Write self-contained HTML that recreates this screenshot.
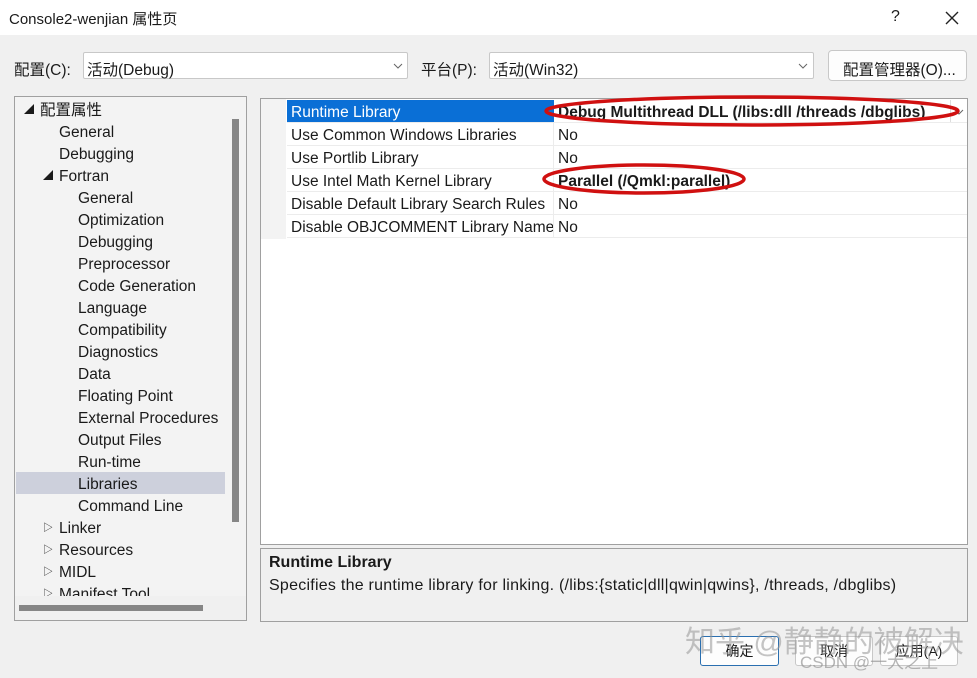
<!DOCTYPE html>
<html><head><meta charset="utf-8"><style>
*{margin:0;padding:0;box-sizing:border-box}
body{width:977px;height:678px;background:#f0f0f0;font-family:"Liberation Sans","Noto Sans CJK SC",sans-serif;font-size:15.5px;color:#1a1a1a;position:relative;overflow:hidden}
.a{position:absolute;white-space:nowrap}
.title{left:0;top:0;width:977px;height:35px;background:#fff}
.combo{background:#fff;border:1px solid #c8c8c8;border-radius:2px;height:27px}
.tree{left:14px;top:96px;width:233px;height:525px;border:1px solid #a0a0a0;background:#f3f3f3}
.ti{position:absolute;height:22px;line-height:24px;white-space:nowrap}
.grid{left:260px;top:98px;width:708px;height:447px;border:1px solid #a0a0a0;background:#fff}
.row{position:absolute;left:26px;width:680px;height:23px;border-bottom:1px solid #ececec;line-height:25px}
.row .n{position:absolute;left:4px;width:263px;overflow:hidden}
.row .v{position:absolute;left:271px}
.desc{left:260px;top:548px;width:708px;height:74px;border:1px solid #a0a0a0;background:#f0f0f0}
.btn{position:absolute;height:30px;border:1px solid #c8c8c8;border-radius:3px;background:#fdfdfd;text-align:center;line-height:28px;font-size:14px}
</style></head><body>
<div class="a title"></div>
<div class="a" style="left:9px;top:8px;font-size:15px">Console2-wenjian 属性页</div>
<div class="a" style="left:891px;top:8px;font-size:16px">?</div>
<svg class="a" style="left:945px;top:11px" width="14" height="14"><path d="M1 1L13 13M13 1L1 13" stroke="#222" stroke-width="1.4"/></svg>

<div class="a" style="left:14px;top:58px">配置(C):</div>
<div class="a combo" style="left:83px;top:52px;width:325px"></div>
<div class="a" style="left:87px;top:58px">活动(Debug)</div>
<svg class="a" style="left:393px;top:63px" width="10" height="6"><path d="M1 1L5 5L9 1" stroke="#666" fill="none"/></svg>
<div class="a" style="left:421px;top:58px">平台(P):</div>
<div class="a combo" style="left:489px;top:52px;width:325px"></div>
<div class="a" style="left:493px;top:58px">活动(Win32)</div>
<svg class="a" style="left:798px;top:63px" width="10" height="6"><path d="M1 1L5 5L9 1" stroke="#666" fill="none"/></svg>
<div class="a combo" style="left:828px;top:50px;width:139px;height:31px;background:#fdfdfd;border-radius:4px"></div>
<div class="a" style="left:843px;top:58px">配置管理器(O)...</div>

<div class="a tree">
<div class="ti" style="left:1px;top:375px;width:209px;background:#cdd0dc"></div>
<div class="ti" style="left:9px;top:2px;font-size:10px">◢</div><div class="ti" style="left:25px;top:2px">配置属性</div>
<div class="ti" style="left:44px;top:24px">General</div>
<div class="ti" style="left:44px;top:46px">Debugging</div>
<div class="ti" style="left:28px;top:68px;font-size:10px">◢</div><div class="ti" style="left:44px;top:68px">Fortran</div>
<div class="ti" style="left:63px;top:90px">General</div>
<div class="ti" style="left:63px;top:112px">Optimization</div>
<div class="ti" style="left:63px;top:134px">Debugging</div>
<div class="ti" style="left:63px;top:156px">Preprocessor</div>
<div class="ti" style="left:63px;top:178px">Code Generation</div>
<div class="ti" style="left:63px;top:200px">Language</div>
<div class="ti" style="left:63px;top:222px">Compatibility</div>
<div class="ti" style="left:63px;top:244px">Diagnostics</div>
<div class="ti" style="left:63px;top:266px">Data</div>
<div class="ti" style="left:63px;top:288px">Floating Point</div>
<div class="ti" style="left:63px;top:310px">External Procedures</div>
<div class="ti" style="left:63px;top:332px">Output Files</div>
<div class="ti" style="left:63px;top:354px">Run-time</div>
<div class="ti" style="left:63px;top:376px">Libraries</div>
<div class="ti" style="left:63px;top:398px">Command Line</div>
<div class="ti" style="left:28px;top:420px;font-size:10px">▷</div><div class="ti" style="left:44px;top:420px">Linker</div>
<div class="ti" style="left:28px;top:442px;font-size:10px">▷</div><div class="ti" style="left:44px;top:442px">Resources</div>
<div class="ti" style="left:28px;top:464px;font-size:10px">▷</div><div class="ti" style="left:44px;top:464px">MIDL</div>
<div class="ti" style="left:28px;top:486px;font-size:10px">▷</div><div class="ti" style="left:44px;top:486px">Manifest Tool</div>
<div style="position:absolute;left:0;top:499px;width:231px;height:24px;background:#f0f0f0"></div>
<div style="position:absolute;left:217px;top:22px;width:7px;height:403px;background:#868686"></div>
<div style="position:absolute;left:4px;top:508px;width:184px;height:6px;background:#868686"></div>
</div>

<div class="a grid">
<div style="position:absolute;left:0;top:0;width:25px;height:140px;background:#f3f3f3"></div>
<div class="row" style="top:1px;background:#fff"><div style="position:absolute;left:0;top:0;width:267px;height:22px;background:#0a6fd6"></div><div class="n" style="color:#fff">Runtime Library</div><div class="v" style="font-weight:bold">Debug Multithread DLL (/libs:dll /threads /dbglibs)</div><div style="position:absolute;left:663px;top:0;width:16px;height:22px;border-left:1px solid #ddd"><svg style="position:absolute;left:3px;top:9px" width="10" height="6"><path d="M1 1L5 5L9 1" stroke="#666" fill="none"/></svg></div></div>
<div class="row" style="top:24px"><div class="n">Use Common Windows Libraries</div><div class="v">No</div></div>
<div class="row" style="top:47px"><div class="n">Use Portlib Library</div><div class="v">No</div></div>
<div class="row" style="top:70px"><div class="n">Use Intel Math Kernel Library</div><div class="v" style="font-weight:bold">Parallel (/Qmkl:parallel)</div></div>
<div class="row" style="top:93px"><div class="n">Disable Default Library Search Rules</div><div class="v">No</div></div>
<div class="row" style="top:116px"><div class="n">Disable OBJCOMMENT Library Name</div><div class="v">No</div></div>
<div style="position:absolute;left:292px;top:23px;width:1px;height:116px;background:#ececec"></div>
</div>
<svg class="a" style="left:540px;top:90px" width="440" height="110"><ellipse cx="212" cy="21" rx="206" ry="14" fill="none" stroke="#d01010" stroke-width="3.5"/><ellipse cx="104" cy="89" rx="100" ry="14" fill="none" stroke="#d01010" stroke-width="3.5"/></svg>

<div class="a desc">
<div class="a" style="left:8px;top:5px;font-weight:bold;font-size:16px">Runtime Library</div>
<div class="a" style="left:8px;top:28px;font-size:16px;letter-spacing:0.25px">Specifies the runtime library for linking. (/libs:{static|dll|qwin|qwins}, /threads, /dbglibs)</div>
</div>

<div class="btn" style="left:700px;top:636px;width:79px;border-color:#2a6fb0">确定</div>
<div class="btn" style="left:795px;top:636px;width:78px">取消</div>
<div class="btn" style="left:880px;top:636px;width:78px">应用(A)</div>
<div class="a" style="left:685px;top:617px;font-size:30px;color:rgba(150,150,150,0.55)">知乎 @静静的被解决</div>
<div class="a" style="left:800px;top:648px;font-size:17px;color:rgba(150,150,150,0.7)">CSDN @一大之上</div>
</body></html>
